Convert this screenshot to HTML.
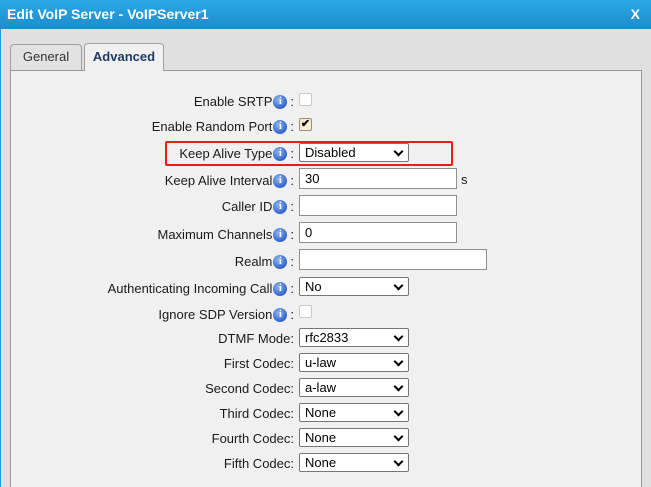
<!DOCTYPE html>
<html style="overflow:hidden;height:487px"><head><meta charset="utf-8"><style>
*{box-sizing:border-box;margin:0;padding:0}
body{width:651px;height:487px;overflow:hidden;background:#e0e0e0;font-family:"Liberation Sans",Arial,sans-serif;font-size:13px;color:#1a1a1a;position:relative}
.hdr{position:absolute;left:0;top:0;width:651px;height:29px;background:linear-gradient(#2aa9e6,#1e8bcc);color:#fff;font-weight:bold;font-size:14px;line-height:28px;padding-left:7px}
.hdr .x{position:absolute;right:11px;top:0;font-size:14px}
.lb{position:absolute;left:0;top:29px;width:1px;height:458px;background:#1e9be0}
.tab{position:absolute;border:1px solid #a0a0a0;border-bottom:none;border-radius:4px 4px 0 0;text-align:center;font-size:13px}
.panel{position:absolute;left:10px;top:70px;width:632px;height:417px;background:#f0f0f0;border:1px solid #9a9a9a;border-bottom:none}
.lab{position:absolute;right:357px;white-space:nowrap;line-height:16px}
.i{display:inline-block;width:14px;height:14px;border-radius:50%;background:radial-gradient(circle at 40% 35%,#8fb7f0,#2f63c8 70%);color:#fff;font:bold 10px/14px "Liberation Serif",serif;text-align:center;vertical-align:2px;margin-left:1px}
.c{margin-left:3px}
.sel{position:absolute;left:299px;width:110px;height:19px;background:#fff;border:1px solid #767676;border-radius:2px;padding-left:5px;line-height:17px;font-size:13px;color:#000}
.sel:after{content:"";position:absolute;right:6px;top:4px;width:5px;height:5px;border-right:2px solid #000;border-bottom:2px solid #000;transform:rotate(45deg)}
.inp{position:absolute;left:299px;width:158px;height:21px;background:#fff;border:1px solid #8f8f8f;padding-left:5px;line-height:19px;color:#000}
.cb{position:absolute;left:299px;width:13px;height:13px;border:1px solid #c8c8c8;border-radius:2px;background:#fff}
</style></head><body>
<div class="hdr">Edit VoIP Server - VoIPServer1<span class="x">X</span></div>
<div class="lb"></div>
<div class="panel"></div>
<div class="tab" style="left:10px;top:44px;width:72px;height:26px;background:#e2e2e2;line-height:24px;color:#333">General</div>
<div class="tab" style="left:84px;top:43px;width:80px;height:28px;background:#f0f0f0;line-height:26px;font-weight:bold;color:#1f3a6a">Advanced</div>

<div class="lab" style="top:94px">Enable SRTP<span class="i">i</span><span class="c">:</span></div>
<div class="cb" style="top:93px"></div>
<div class="lab" style="top:119px">Enable Random Port<span class="i">i</span><span class="c">:</span></div>
<div class="cb" style="top:118px;background:#f7ecd0;border-color:#a09070;font-size:11px;line-height:11px;text-align:center;font-weight:bold;color:#000">✔</div>

<div style="position:absolute;left:165px;top:141px;width:288px;height:25px;border:2px solid #f01a1a;border-radius:2px"></div>
<div class="lab" style="top:146px">Keep Alive Type<span class="i">i</span><span class="c">:</span></div>
<div class="sel" style="top:143px">Disabled</div>

<div class="lab" style="top:173px">Keep Alive Interval<span class="i">i</span><span class="c">:</span></div>
<div class="inp" style="top:168px">30</div>
<div style="position:absolute;left:461px;top:172px">s</div>

<div class="lab" style="top:199px">Caller ID<span class="i">i</span><span class="c">:</span></div>
<div class="inp" style="top:195px"></div>
<div class="lab" style="top:227px">Maximum Channels<span class="i">i</span><span class="c">:</span></div>
<div class="inp" style="top:222px">0</div>
<div class="lab" style="top:254px">Realm<span class="i">i</span><span class="c">:</span></div>
<div class="inp" style="top:249px;width:188px"></div>

<div class="lab" style="top:281px">Authenticating Incoming Call<span class="i">i</span><span class="c">:</span></div>
<div class="sel" style="top:277px">No</div>
<div class="lab" style="top:307px">Ignore SDP Version<span class="i">i</span><span class="c">:</span></div>
<div class="cb" style="top:305px"></div>

<div class="lab" style="top:331px">DTMF Mode:</div>
<div class="sel" style="top:328px">rfc2833</div>
<div class="lab" style="top:356px">First Codec:</div>
<div class="sel" style="top:353px">u-law</div>
<div class="lab" style="top:381px">Second Codec:</div>
<div class="sel" style="top:378px">a-law</div>
<div class="lab" style="top:406px">Third Codec:</div>
<div class="sel" style="top:403px">None</div>
<div class="lab" style="top:431px">Fourth Codec:</div>
<div class="sel" style="top:428px">None</div>
<div class="lab" style="top:456px">Fifth Codec:</div>
<div class="sel" style="top:453px">None</div>
</body></html>
